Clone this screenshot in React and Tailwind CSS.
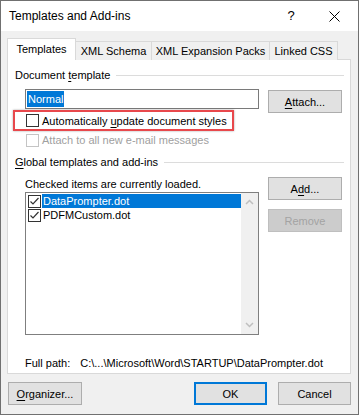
import React from "react";

function Check({ checked = false, disabled = false }) {
  return (
    <div
      className={
        "w-[13px] h-[13px] border bg-white flex items-center justify-center shrink-0 " +
        (disabled ? "border-[#c4c4c4]" : "border-[#333333]")
      }
    >
      {checked && (
        <svg width="11" height="11" viewBox="0 0 11 11">
          <path d="M1.5 5.5 L4 8 L9.5 2" fill="none" stroke="#333333" strokeWidth="1.2" />
        </svg>
      )}
    </div>
  );
}

function Btn({ children, className = "", disabled = false, def = false }) {
  return (
    <div
      className={
        "flex items-center justify-center h-[23px] whitespace-nowrap " +
        (disabled
          ? "bg-[#cccccc] border border-[#bfbfbf] text-[#a3a3a3] "
          : def
          ? "bg-[#e1e1e1] border-2 border-[#0078d7] text-black "
          : "bg-[#e1e1e1] border border-[#adadad] text-black ") +
        className
      }
    >
      {children}
    </div>
  );
}

export default function App() {
  return (
    <div className="w-[359px] h-[415px] border border-[#707070] flex flex-col font-['Liberation_Sans',Arial,sans-serif] text-[11px] leading-[14px] text-black bg-[#f0f0f0] overflow-hidden whitespace-nowrap">
      {/* title bar */}
      <div className="h-[30px] bg-white flex items-center shrink-0">
        <div className="pl-[8px] flex-1 text-[12px]">Templates and Add-ins</div>
        <div className="w-[20px] text-center text-[13px] mr-[28px]">?</div>
        <svg width="11" height="11" viewBox="0 0 11 11" className="mr-[18px]">
          <path d="M0.5 0.5 L10.5 10.5 M10.5 0.5 L0.5 10.5" stroke="#000" strokeWidth="1" />
        </svg>
      </div>

      {/* body */}
      <div className="flex-1 flex flex-col pl-[6px] pr-[7px] pt-[7px] pb-[8px]">
        {/* tabs */}
        <div className="flex items-end h-[22px] relative z-10">
          <div className="h-[22px] w-[69px] bg-white border border-[#d9d9d9] border-b-0 flex items-center justify-center pb-[1px]">
            Templates
          </div>
          <div className="h-[19px] w-[76px] bg-[#f0f0f0] border border-[#d9d9d9] border-l-0 border-b-0 flex items-center justify-center">
            XML Schema
          </div>
          <div className="h-[19px] w-[118px] bg-[#f0f0f0] border border-[#d9d9d9] border-l-0 border-b-0 flex items-center justify-center">
            XML Expansion Packs
          </div>
          <div className="h-[19px] w-[68px] bg-[#f0f0f0] border border-[#d9d9d9] border-l-0 border-b-0 flex items-center justify-center">
            Linked CSS
          </div>
        </div>

        {/* panel */}
        <div className="h-[315px] bg-white border border-[#d9d9d9] -mt-[1px] flex flex-col pt-[7px]">
          {/* heading 1 */}
          <div className="flex items-center h-[16px] pl-[7px] pr-[6px]">
            <span>
              Document <span className="underline underline-offset-2">t</span>emplate
            </span>
            <div className="flex-1 h-px bg-[#dcdcdc] ml-[6px]"></div>
          </div>

          {/* input row */}
          <div className="flex items-start mt-[6px] pl-[17px] pr-[6px] h-[21px]">
            <div className="w-[234px] h-[20px] border border-[#7a7a7a] flex items-center px-[1px]">
              <span className="bg-[#0078d7] text-white leading-[16px] px-[1px]">Normal</span>
            </div>
            <Btn className="ml-[9px] w-[74px] mt-[1px] h-[21px]">
              <span>
                <span className="underline underline-offset-2">A</span>ttach...
              </span>
            </Btn>
          </div>

          {/* red box */}
          <div className="ml-[5px] w-[221px] h-[21px] border-2 border-[#e8484c] flex items-center pl-[11px] shadow-[0_0_2px_rgba(0,0,0,0.35)]">
            <Check />
            <span className="ml-[3px]">
              Automatically <span className="underline underline-offset-2">u</span>pdate document styles
            </span>
          </div>

          {/* disabled checkbox */}
          <div className="flex items-center h-[14px] mt-[2px] pl-[18px] text-[#a0a0a0]">
            <Check disabled />
            <span className="ml-[3px]">Attach to all new e-mail messages</span>
          </div>

          {/* heading 2 */}
          <div className="flex items-center h-[16px] mt-[7px] pl-[7px] pr-[6px]">
            <span>
              <span className="underline underline-offset-2">G</span>lobal templates and add-ins
            </span>
            <div className="flex-1 h-px bg-[#dcdcdc] ml-[6px]"></div>
          </div>

          {/* list area */}
          <div className="flex mt-[5px] pl-[17px] pr-[6px]">
            <div className="flex flex-col w-[234px]">
              <div className="h-[17px] flex items-center">Checked items are currently loaded.</div>
              <div className="h-[143px] border border-[#7f7f7f] flex">
                <div className="flex-1 flex flex-col pt-[1px] pl-[2px]">
                  <div className="flex items-center h-[14px]">
                    <Check checked />
                    <div className="flex-1 h-[14px] bg-[#0078d7] text-white flex items-center pl-[1px] ml-[1px]">
                      DataPrompter.dot
                    </div>
                  </div>
                  <div className="flex items-center h-[14px]">
                    <Check checked />
                    <div className="flex-1 h-[14px] flex items-center pl-[1px] ml-[1px]">PDFMCustom.dot</div>
                  </div>
                </div>
                <div className="w-[17px] bg-[#f0f0f0] flex flex-col items-center justify-between py-[6px]">
                  <svg width="9" height="6" viewBox="0 0 9 6">
                    <path d="M1 5 L4.5 1.5 L8 5" fill="none" stroke="#bfbfbf" strokeWidth="1.5" />
                  </svg>
                  <svg width="9" height="6" viewBox="0 0 9 6">
                    <path d="M1 1 L4.5 4.5 L8 1" fill="none" stroke="#bfbfbf" strokeWidth="1.5" />
                  </svg>
                </div>
              </div>
            </div>
            <div className="flex flex-col ml-[9px] pt-[2px]">
              <Btn className="w-[74px] h-[21px]">
                <span>
                  A<span className="underline underline-offset-2">d</span>d...
                </span>
              </Btn>
              <Btn disabled className="w-[74px] h-[21px] mt-[9px]">
                Remove
              </Btn>
            </div>
          </div>

          {/* full path */}
          <div className="flex items-center mt-[20px] pl-[17px] h-[16px]">
            <span>Full path:</span>
            <span className="ml-[10px]">C:\...\Microsoft\Word\STARTUP\DataPrompter.dot</span>
          </div>
        </div>

        {/* bottom buttons */}
        <div className="flex items-center mt-[8px] pl-[1px]">
          <Btn className="w-[74px]">
            <span>
              <span className="underline underline-offset-2">O</span>rganizer...
            </span>
          </Btn>
          <div className="flex-1"></div>
          <Btn def className="w-[73px]">OK</Btn>
          <Btn className="w-[73px] ml-[11px]">Cancel</Btn>
        </div>
      </div>
    </div>
  );
}
